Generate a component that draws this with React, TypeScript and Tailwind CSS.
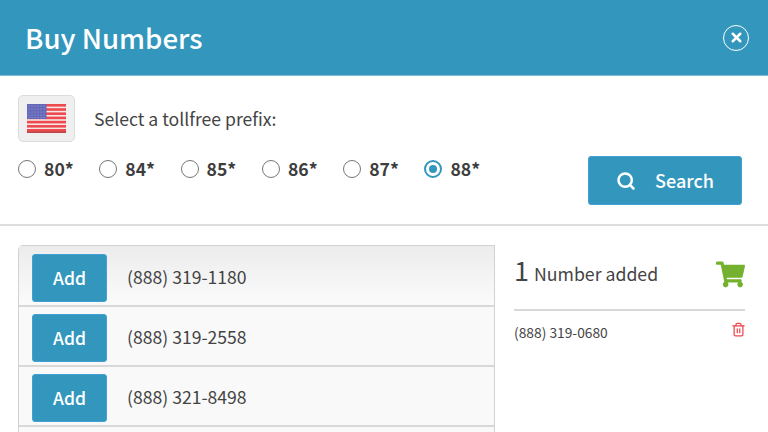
import React from "react";
import { Search, Trash2, X } from "lucide-react";
import { FaShoppingCart } from "react-icons/fa";

const prefixes = ["80*", "84*", "85*", "86*", "87*", "88*"];
const numbers = ["(888) 319-1180", "(888) 319-2558", "(888) 321-8498"];

function Flag() {
  return (
    <svg width="39" height="29" viewBox="0 0 39 29">
      <rect width="39" height="29" fill="#f6e6e6" />
      {[0, 4.2, 8.4, 12.6, 16.8, 21, 25].map((y) => (
        <rect key={y} y={y} width="39" height={y === 25 ? 4 : 2.6} fill="#ec4a4c" />
      ))}
      <rect y="27.5" width="39" height="1.5" fill="#b9484a" />
      <rect width="19.5" height="15" fill="#6567b8" />
      {[2, 5, 8, 11, 13.5].map((y) =>
        [2, 5, 8, 11, 14, 17].map((x) => <circle key={x + "-" + y} cx={x} cy={y} r="0.55" fill="#a5a8da" />)
      )}
    </svg>
  );
}

function Radio({ label, checked }: { label: string; checked?: boolean }) {
  return (
    <div className="flex w-[81.3px] items-center">
      <span
        className={
          checked
            ? "flex h-[18px] w-[18px] items-center justify-center rounded-full border-2 border-[#3397bd]"
            : "h-[18px] w-[18px] rounded-full border border-[#777777] bg-white"
        }
      >
        {checked && <span className="h-[8px] w-[8px] rounded-full bg-[#3397bd]" />}
      </span>
      <span className="ml-[8px] text-[17.6px] leading-none font-bold text-[#3d3d3d]">{label}</span>
    </div>
  );
}

export default function App() {
  return (
    <div
      className="flex h-[432px] w-[768px] flex-col overflow-hidden bg-white text-[#444444]"
      style={{ fontFamily: '"Noto Sans CJK SC", "Noto Sans", sans-serif' }}
    >
      {/* header */}
      <div className="flex h-[76px] shrink-0 items-center justify-between border-b border-[#7fbdd6] bg-[#3397bd] pr-[19px] pl-[25px]">
        <h1 className="text-[27.6px] font-medium text-white">Buy Numbers</h1>
        <div className="flex h-[26px] w-[26px] items-center justify-center rounded-full border border-white">
          <X size={15} strokeWidth={4} className="text-white" />
        </div>
      </div>

      {/* prefix selection */}
      <div className="flex h-[150px] shrink-0 items-start justify-between border-b-2 border-[#dddddd] pr-[26px] pl-[18px]">
        <div className="flex flex-col pt-[19px]">
          <div className="flex items-center">
            <div className="flex h-[47px] w-[57px] items-center justify-center rounded-[5px] border border-[#dcdcdc] bg-[#efefef]">
              <Flag />
            </div>
            <span className="mt-[1px] ml-[19px] text-[17.6px] text-[#444444]">Select a tollfree prefix:</span>
          </div>
          <div className="mt-[18px] flex">
            {prefixes.map((p) => (
              <Radio key={p} label={p} checked={p === "88*"} />
            ))}
          </div>
        </div>
        <button className="mt-[80px] flex h-[49px] w-[154px] items-center justify-center gap-[19px] rounded-[3px] border border-[#43a0d4] bg-[#3397bd] text-[18px] font-medium text-white">
          <Search size={20} strokeWidth={3} />
          Search
        </button>
      </div>

      {/* results */}
      <div className="flex flex-1 items-start pt-[19px] pr-[23px] pl-[18px]">
        <div className="w-[477px] rounded-tl-[5px] border-t border-r border-l border-[#d2d2d2]">
          {numbers.map((n, i) => (
            <div
              key={n}
              className={
                i === 0
                  ? "flex h-[61px] items-start border-b-2 border-[#d8d8d8] bg-gradient-to-b from-[#ececec] to-[#fbfbfb] pt-[8px] pl-[13px]"
                  : "flex h-[60px] items-start border-b-2 border-[#d8d8d8] bg-[#f9f9f9] pt-[7px] pl-[13px]"
              }
            >
              <button className="flex h-[48px] w-[75px] items-center justify-center rounded-[3px] border border-[#43a0d4] bg-[#3397bd] text-[17.5px] font-medium text-white">
                Add
              </button>
              <span className="mt-[-1px] ml-[20px] flex h-[48px] items-center text-[17.6px] text-[#444444]">{n}</span>
            </div>
          ))}
          <div className="h-[10px] bg-[#f9f9f9]" />
        </div>

        <div className="ml-[19px] flex flex-1 flex-col">
          <div className="flex h-[66px] items-start justify-between border-b-2 border-[#d8d8d8] pt-[11px]">
            <div className="flex h-[24px] items-baseline">
              <span className="text-[27px] leading-none text-[#444444]">1</span>
              <span className="ml-[5px] text-[17.7px] leading-none text-[#444444]">Number added</span>
            </div>
            <FaShoppingCart size={29} className="mt-[4px] text-[#74b12e]" />
          </div>
          <div className="flex items-center justify-between pt-[11px]">
            <span className="text-[13.8px] text-[#444444]">(888) 319-0680</span>
            <Trash2 size={15} strokeWidth={2} className="mt-[-5px] mr-[-1px] text-[#f0454f]" />
          </div>
        </div>
      </div>
    </div>
  );
}
